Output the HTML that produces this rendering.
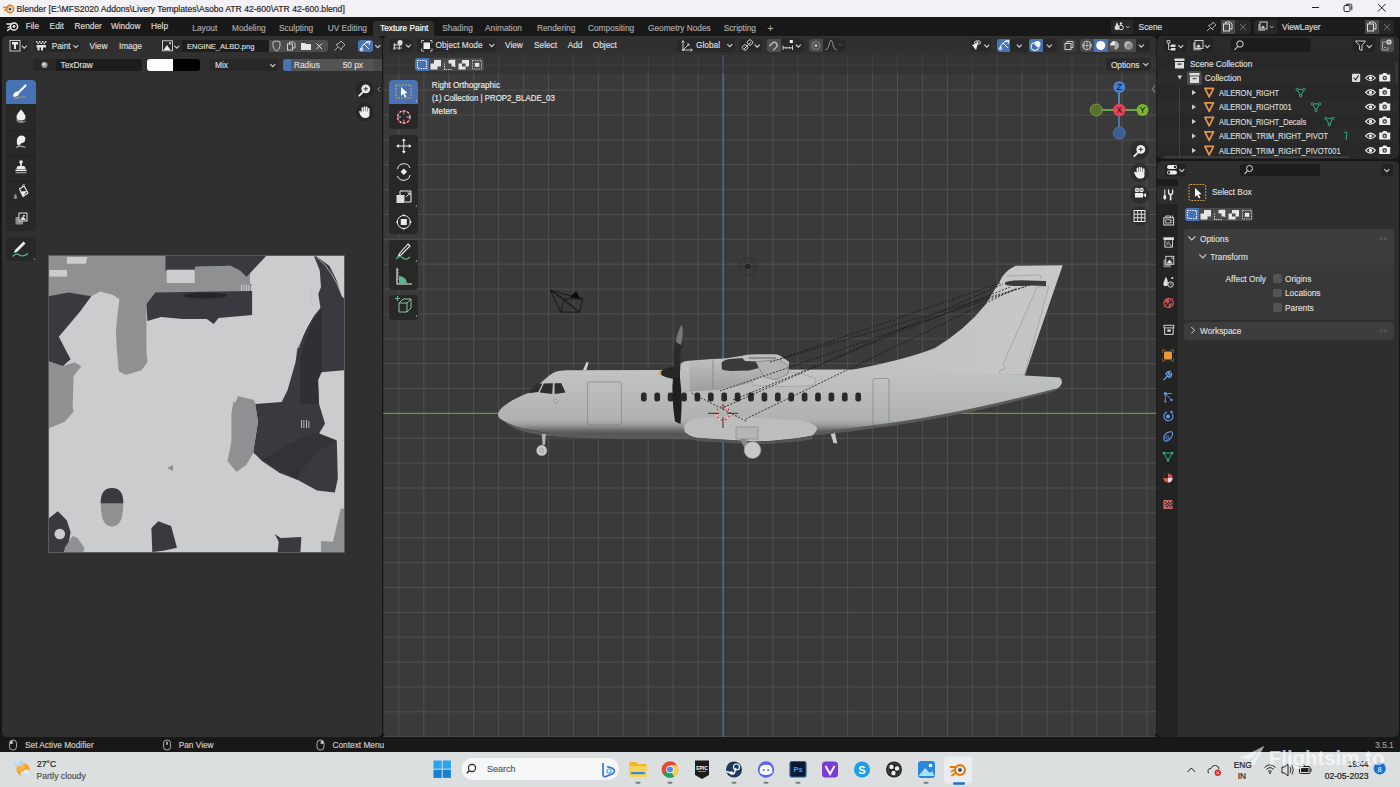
<!DOCTYPE html><html><head><meta charset="utf-8"><style>
*{margin:0;padding:0;box-sizing:border-box}
html,body{width:1400px;height:787px;overflow:hidden;background:#161616;font-family:"Liberation Sans",sans-serif;font-size:8.3px;color:#ddd}
.a{position:absolute}
.t{position:absolute;white-space:nowrap;line-height:1;-webkit-text-stroke:0.18px currentColor}
svg{overflow:visible}
</style></head><body>
<div class="a" style="left:0px;top:0px;width:1400px;height:17px;background:#f3f1f6;"></div>
<svg class="a" style="left:3px;top:3px;" width="12" height="11" viewBox="0 0 12 11"><circle cx="7" cy="6" r="3.6" fill="#f5f5f5" stroke="#e87d0d" stroke-width="1.6"/><circle cx="7" cy="6" r="1.5" fill="#265787"/><path d="M0.5 4.5 L5 4.5 M1.5 7.5 L4 6" stroke="#e87d0d" stroke-width="1.3" stroke-linecap="round"/></svg>
<div class="t" style="left:16.6px;top:5.00px;font-size:8.6px;color:#262626;">Blender [E:\MFS2020 Addons\Livery Templates\Asobo ATR 42-600\ATR 42-600.blend]</div>
<div class="a" style="left:1312px;top:7px;width:7px;height:1px;background:#1f1f1f;"></div>
<svg class="a" style="left:1343px;top:3px;" width="10" height="9" viewBox="0 0 10 9"><rect x="1" y="2.5" width="6" height="6" rx="1.2" fill="none" stroke="#1f1f1f" stroke-width="1"/><path d="M3 1.2 H7.5 Q8.8 1.2 8.8 2.5 V7" fill="none" stroke="#1f1f1f" stroke-width="1"/></svg>
<svg class="a" style="left:1377px;top:3px;" width="10" height="10" viewBox="0 0 10 10"><path d="M1 1 L8.5 8.5 M8.5 1 L1 8.5" stroke="#1f1f1f" stroke-width="1"/></svg>
<div class="a" style="left:0px;top:17px;width:1400px;height:19px;background:#181818;"></div>
<svg class="a" style="left:6px;top:20px;" width="14" height="12" viewBox="0 0 14 12"><circle cx="8" cy="6.5" r="3.6" fill="none" stroke="#e8e8e8" stroke-width="1.5"/><circle cx="8" cy="6.5" r="1.4" fill="#e8e8e8"/><path d="M1 4 L6 4 M2 7.5 L4.5 6 M1.5 10.5 L5 8" stroke="#e8e8e8" stroke-width="1.4" stroke-linecap="round"/></svg>
<div class="t" style="left:25.7px;top:22.00px;font-size:8.3px;color:#d8d8d8;">File</div>
<div class="t" style="left:49.6px;top:22.00px;font-size:8.3px;color:#d8d8d8;">Edit</div>
<div class="t" style="left:74.6px;top:22.00px;font-size:8.3px;color:#d8d8d8;">Render</div>
<div class="t" style="left:110.9px;top:22.00px;font-size:8.3px;color:#d8d8d8;">Window</div>
<div class="t" style="left:151px;top:22.00px;font-size:8.3px;color:#d8d8d8;">Help</div>
<div class="a" style="left:373px;top:21px;width:61px;height:15px;background:#303030;border-radius:4px 4px 0 0"></div>
<div class="t" style="left:192.3px;top:24.00px;font-size:8.3px;color:#a8a8a8;">Layout</div>
<div class="t" style="left:232px;top:24.00px;font-size:8.3px;color:#a8a8a8;">Modeling</div>
<div class="t" style="left:279px;top:24.00px;font-size:8.3px;color:#a8a8a8;">Sculpting</div>
<div class="t" style="left:327.7px;top:24.00px;font-size:8.3px;color:#a8a8a8;">UV Editing</div>
<div class="t" style="left:380px;top:24.00px;font-size:8.3px;color:#ffffff;">Texture Paint</div>
<div class="t" style="left:442.3px;top:24.00px;font-size:8.3px;color:#a8a8a8;">Shading</div>
<div class="t" style="left:485px;top:24.00px;font-size:8.3px;color:#a8a8a8;">Animation</div>
<div class="t" style="left:537px;top:24.00px;font-size:8.3px;color:#a8a8a8;">Rendering</div>
<div class="t" style="left:588px;top:24.00px;font-size:8.3px;color:#a8a8a8;">Compositing</div>
<div class="t" style="left:648px;top:24.00px;font-size:8.3px;color:#a8a8a8;">Geometry Nodes</div>
<div class="t" style="left:723.7px;top:24.00px;font-size:8.3px;color:#a8a8a8;">Scripting</div>
<div class="t" style="left:767.5px;top:24.00px;font-size:10px;color:#a8a8a8;">+</div>
<div class="a" style="left:1110.5px;top:19.5px;width:140px;height:14px;background:#282828;border-radius:3px"></div>
<div class="a" style="left:1133px;top:19.5px;width:88px;height:14px;background:#1d1d1d;"></div>
<div class="a" style="left:1221px;top:19.5px;width:14px;height:14px;background:#4a4a4a;"></div>
<div class="t" style="left:1138.6px;top:23.00px;font-size:8.3px;color:#d8d8d8;">Scene</div>
<svg class="a" style="left:1113px;top:21px;" width="18" height="11" viewBox="0 0 18 11"><path d="M4 1 L1.5 7 Q1.5 9 4 9 Q6.5 9 6.5 7 Z" fill="#ddd"/><circle cx="8" cy="6.5" r="2.3" fill="none" stroke="#ddd" stroke-width="1"/><circle cx="8" cy="2.5" r="1.2" fill="#ddd"/><path d="M13 5 l1.8 1.8 l1.8 -1.8" fill="none" stroke="#ccc" stroke-width="0.9"/></svg>
<svg class="a" style="left:1206px;top:21px;" width="12" height="11" viewBox="0 0 12 11"><path d="M7 1 L10 4 L8.5 5 L6.5 7.5 L7 9 L2.5 4.5 L4 4 L6.5 2.5 Z M4.5 6.5 L1 10" fill="none" stroke="#bbb" stroke-width="0.9"/></svg>
<svg class="a" style="left:1222px;top:21px;" width="12" height="11" viewBox="0 0 12 11"><rect x="1.5" y="3" width="6" height="7" fill="none" stroke="#ddd" stroke-width="1"/><path d="M3.5 3 V1 H8 L10 3 V8 H7.5" fill="none" stroke="#ddd" stroke-width="1"/></svg>
<svg class="a" style="left:1237px;top:21px;" width="12" height="11" viewBox="0 0 12 11"><path d="M3 3 L9 9 M9 3 L3 9" stroke="#777" stroke-width="0.9"/></svg>
<div class="a" style="left:1254px;top:19.5px;width:140px;height:14px;background:#282828;border-radius:3px"></div>
<div class="a" style="left:1277px;top:19.5px;width:88px;height:14px;background:#1d1d1d;"></div>
<div class="a" style="left:1365px;top:19.5px;width:14px;height:14px;background:#4a4a4a;"></div>
<div class="t" style="left:1282px;top:23.00px;font-size:8.3px;color:#d8d8d8;">ViewLayer</div>
<svg class="a" style="left:1257px;top:21px;" width="18" height="11" viewBox="0 0 18 11"><rect x="1" y="3" width="7" height="7" fill="#777"/><rect x="3" y="1" width="7" height="7" fill="#2a2a2a" stroke="#ddd" stroke-width="0.9"/><path d="M4 7 L6 4.5 L8 7 Z" fill="#ddd"/><path d="M13 5 l1.8 1.8 l1.8 -1.8" fill="none" stroke="#ccc" stroke-width="0.9"/></svg>
<svg class="a" style="left:1366px;top:21px;" width="12" height="11" viewBox="0 0 12 11"><rect x="1.5" y="3" width="6" height="7" fill="none" stroke="#ddd" stroke-width="1"/><path d="M3.5 3 V1 H8 L10 3 V8 H7.5" fill="none" stroke="#ddd" stroke-width="1"/></svg>
<svg class="a" style="left:1381px;top:21px;" width="12" height="11" viewBox="0 0 12 11"><path d="M3 3 L9 9 M9 3 L3 9" stroke="#777" stroke-width="0.9"/></svg>
<div class="a" style="left:1.5px;top:36px;width:380.3px;height:701px;background:#303030;border-radius:5px"></div>
<div class="a" style="left:8.9px;top:39.7px;width:18.7px;height:12.5px;background:#282828;border-radius:3px"></div>
<svg class="a" style="left:9px;top:40px;" width="19" height="12" viewBox="0 0 19 12"><rect x="1" y="0.5" width="10" height="10.5" fill="none" stroke="#d8d8d8" stroke-width="0.9"/><path d="M3 2 H9 V4.5 H7 V9 H5 V4.5 H3 Z" fill="#e8e8e8"/><path d="M12.8 5.6 l2.5 2.5 l2.5 -2.5" fill="none" stroke="#cfcfcf" stroke-width="1.15"/></svg>
<div class="a" style="left:33.9px;top:39.7px;width:45.7px;height:12.5px;background:#282828;border-radius:3px"></div>
<svg class="a" style="left:35px;top:40px;" width="14" height="12" viewBox="0 0 14 12"><g fill="#e0e0e0"><rect x="1" y="1" width="1.5" height="1.5"/><rect x="4" y="1" width="1.5" height="1.5"/><rect x="7" y="1" width="1.5" height="1.5"/><rect x="10" y="1" width="1.5" height="1.5"/><rect x="2.5" y="2.5" width="1.5" height="1.5"/><rect x="5.5" y="2.5" width="1.5" height="1.5"/><rect x="8.5" y="2.5" width="1.5" height="1.5"/><path d="M1.5 5 H11 V7.5 H8 V10.5 H6 V7.5 H4.5 V10.5 H2.5 V7.5 H1.5Z"/></g></svg>
<div class="t" style="left:51.7px;top:42.00px;font-size:8.3px;color:#dcdcdc;">Paint</div>
<svg class="a" style="left:73px;top:44px;" width="6" height="4" viewBox="0 0 6 4"><path d="M0.3 1.1 l2.5 2.5 l2.5 -2.5" fill="none" stroke="#cfcfcf" stroke-width="1.15"/></svg>
<div class="t" style="left:89.6px;top:42.00px;font-size:8.3px;color:#dcdcdc;">View</div>
<div class="t" style="left:118.9px;top:42.00px;font-size:8.3px;color:#dcdcdc;">Image</div>
<div class="a" style="left:160.5px;top:39.7px;width:21px;height:12.5px;background:#282828;border-radius:3px 0 0 3px"></div>
<svg class="a" style="left:161px;top:40px;" width="20" height="12" viewBox="0 0 20 12"><rect x="1.5" y="0.8" width="10" height="10" fill="none" stroke="#ddd" stroke-width="0.9"/><path d="M2.5 10 L6 5 L9.5 10Z" fill="#eee"/><circle cx="9" cy="3.3" r="1" fill="#eee"/><path d="M13.3 5.6 l2.5 2.5 l2.5 -2.5" fill="none" stroke="#cfcfcf" stroke-width="1.15"/></svg>
<div class="a" style="left:182px;top:39.7px;width:87px;height:12.5px;background:#1d1d1d;"></div>
<div class="t" style="left:187px;top:43.00px;font-size:8.1px;color:#dcdcdc;transform:scaleX(0.93);transform-origin:0 0">ENGINE_ALBD.png</div>
<div class="a" style="left:269px;top:39.7px;width:58.5px;height:12.5px;background:#4d4d4d;border-radius:0 3px 3px 0"></div>
<svg class="a" style="left:269px;top:40px;" width="58" height="12" viewBox="0 0 58 12"><path d="M4 2 L7.5 1 L11 2 V6 Q11 9 7.5 11 Q4 9 4 6Z" fill="none" stroke="#cfcfcf" stroke-width="0.9"/><rect x="18.5" y="4" width="5" height="6" fill="none" stroke="#ddd" stroke-width="0.9"/><path d="M20.5 4 V2 H24.5 L26 3.5 V8 H23.5" fill="none" stroke="#ddd" stroke-width="0.9"/><path d="M32 3 H36 L37 4 H42 V10 H32Z" fill="#e6e6e6"/><path d="M47.5 3.5 L53 9 M53 3.5 L47.5 9" stroke="#ddd" stroke-width="1"/></svg>
<svg class="a" style="left:333px;top:40px;" width="14" height="12" viewBox="0 0 14 12"><path d="M8 1 L12 5 L10.5 6 L8 9 L8.5 10 L3 4.5 L4.5 4 L7 2.5Z M5 7 L1.5 10.5" fill="none" stroke="#bdbdbd" stroke-width="0.9"/></svg>
<div class="a" style="left:358px;top:39.7px;width:14.5px;height:12.5px;background:#4772b3;border-radius:3px"></div>
<svg class="a" style="left:358px;top:40px;" width="15" height="12" viewBox="0 0 15 12"><path d="M3 10 Q4 3 11 2" fill="none" stroke="#fff" stroke-width="1"/><circle cx="3.5" cy="9.5" r="1.3" fill="none" stroke="#fff" stroke-width="0.9"/><path d="M8 2 L12 1.5 L11 5" fill="none" stroke="#fff" stroke-width="0.9"/><path d="M6 4 L11 9" stroke="#fff" stroke-width="0.9"/></svg>
<svg class="a" style="left:375px;top:44px;" width="6" height="4" viewBox="0 0 6 4"><path d="M0.3 1.1 l2.5 2.5 l2.5 -2.5" fill="none" stroke="#cfcfcf" stroke-width="1.15"/></svg>
<div class="a" style="left:33px;top:58.6px;width:108.9px;height:12.4px;background:#282828;border-radius:3px"></div>
<div class="a" style="left:55.7px;top:58.6px;width:86.2px;height:12.4px;background:#1d1d1d;border-radius:0 3px 3px 0"></div>
<svg class="a" style="left:39px;top:59px;" width="12" height="12" viewBox="0 0 12 12"><circle cx="5.5" cy="6" r="3" fill="#9a9a9a"/><circle cx="4.8" cy="5.2" r="1.6" fill="#d0d0d0"/></svg>
<div class="t" style="left:60.5px;top:61.00px;font-size:8.3px;color:#dcdcdc;">TexDraw</div>
<div class="a" style="left:147px;top:58.6px;width:26px;height:12.4px;background:#ffffff;border-radius:3px 0 0 3px"></div>
<div class="a" style="left:173px;top:58.6px;width:26.5px;height:12.4px;background:#000000;border-radius:0 3px 3px 0"></div>
<div class="a" style="left:209px;top:58.6px;width:68.5px;height:12.4px;background:#282828;border-radius:3px"></div>
<div class="t" style="left:215px;top:61.00px;font-size:8.3px;color:#dcdcdc;">Mix</div>
<svg class="a" style="left:270px;top:63px;" width="6" height="4" viewBox="0 0 6 4"><path d="M0.3 1.1 l2.5 2.5 l2.5 -2.5" fill="none" stroke="#cfcfcf" stroke-width="1.15"/></svg>
<div class="a" style="left:283px;top:58.6px;width:90px;height:12.4px;background:#545454;border-radius:3px 0 0 3px"></div>
<div class="a" style="left:283px;top:58.6px;width:7.5px;height:12.4px;background:#4772b3;border-radius:3px 0 0 3px"></div>
<div class="t" style="left:294px;top:61.00px;font-size:8.3px;color:#dcdcdc;">Radius</div>
<div class="t" style="left:342.7px;top:61.00px;font-size:8.3px;color:#dcdcdc;">50 px</div>
<div class="a" style="left:373px;top:58.6px;width:8.5px;height:12.4px;background:#4a4a4a;"></div>
<div class="a" style="left:6.4px;top:80.2px;width:29.6px;height:151px;background:#282828;border-radius:4px"></div>
<div class="a" style="left:6.4px;top:80.2px;width:29.6px;height:24.3px;background:#4772b3;border-radius:4px 4px 0 0"></div>
<div class="a" style="left:6.4px;top:104.5px;width:29.6px;height:0.8px;background:#222;"></div>
<div class="a" style="left:6.4px;top:129.8px;width:29.6px;height:0.8px;background:#222;"></div>
<div class="a" style="left:6.4px;top:155.4px;width:29.6px;height:0.8px;background:#222;"></div>
<div class="a" style="left:6.4px;top:181px;width:29.6px;height:0.8px;background:#222;"></div>
<div class="a" style="left:6.4px;top:206px;width:29.6px;height:0.8px;background:#222;"></div>
<div class="a" style="left:6.4px;top:236.7px;width:29.6px;height:24.8px;background:#282828;border-radius:4px"></div>
<svg class="a" style="left:0px;top:0px;" width="1" height="1" viewBox="0 0 1 1"><path d="M25.5 85.5 L18.5 92.5" stroke="#fff" stroke-width="2.2" stroke-linecap="round"/><path d="M13 96.5 Q13.5 92 17 91.5 Q19.5 92.5 18.5 95 Q16.5 97.5 13 96.5Z" fill="#fff"/><path d="M15 98.5 Q20 96.5 25 97" fill="none" stroke="#9a8f80" stroke-width="1.4" stroke-linecap="round"/><path d="M21 109.5 Q25.5 114.5 25.5 117 Q25.5 120.5 21 120.5 Q16.5 120.5 16.5 117 Q16.5 114.5 21 109.5Z" fill="#eee"/><path d="M16 118.5 Q16.5 123 21.5 123 Q25 123 26 120.5 Q21 122.5 16 118.5Z" fill="#8a8a8a"/><path d="M17 144 Q16 138 19.5 136 Q23.5 134.5 25.5 138 L24.5 142 L21 143.5 L19 146Z" fill="#eee"/><path d="M16 147.5 Q20 145 25.5 147.5" fill="none" stroke="#999" stroke-width="1.3"/><circle cx="21" cy="162" r="1.8" fill="#eee"/><rect x="20.2" y="163" width="1.6" height="3" fill="#eee"/><path d="M16.5 169 Q16.5 166 19 166 H23 Q25.5 166 25.5 169Z" fill="#eee"/><rect x="15.5" y="169.5" width="11" height="1.6" fill="#eee"/><rect x="15.5" y="172" width="11" height="1.3" fill="#999"/><path d="M19.5 189 L24 186 L28 193 L23 196.5 Z" fill="#2a2a2a" stroke="#eee" stroke-width="1.1" stroke-linejoin="round"/><path d="M20.5 191.5 L27 191 L23 196 Z" fill="#eee"/><path d="M22 186 Q23 183.5 25 185" fill="none" stroke="#ccc" stroke-width="0.8"/><path d="M15.5 193.5 Q13.5 196 13.8 197.5 Q14.2 199.2 15.8 199 Q17.3 198.8 17.2 197 Q17 195.5 15.5 193.5Z" fill="#8a8a8a"/><rect x="15.5" y="217" width="7.5" height="7.5" fill="#8a8a8a"/><rect x="19" y="213" width="8" height="8" fill="#2a2a2a" stroke="#ddd" stroke-width="1"/><path d="M20 220 L23 216 L26 220Z" fill="#ddd"/><circle cx="24" cy="215.8" r="1" fill="#ddd"/><path d="M23.5 241.5 L25.5 243.5 L17 252 L14 253 L15 250Z" fill="#eee"/><path d="M12.5 256.5 Q16 252.5 19.5 255 Q23 257.5 28 253.5" fill="none" stroke="#5cb88a" stroke-width="1.2"/><path d="M33.5 259.5 h1.5 v-1.5z" fill="#bbb"/></svg>
<svg class="a" style="left:0px;top:0px;" width="1" height="1" viewBox="0 0 1 1"><circle cx="364.6" cy="89.6" r="9.2" fill="#262626"/><circle cx="364.6" cy="112" r="9.2" fill="#262626"/><circle cx="365.8" cy="88.8" r="4.4" fill="#eee"/><circle cx="365.8" cy="88.8" r="3.2" fill="#e6e6e6"/><path d="M365.8 86.7 V90.9 M363.7 88.8 H367.9" stroke="#222" stroke-width="0.9"/><path d="M362.6 92.3 L359.3 95.6" stroke="#eee" stroke-width="1.8" stroke-linecap="round"/><g fill="#eee"><rect x="361.6" y="107.2" width="1.7" height="6" rx="0.85"/><rect x="363.7" y="106.2" width="1.7" height="6.5" rx="0.85"/><rect x="365.8" y="106.6" width="1.7" height="6.5" rx="0.85"/><rect x="367.9" y="108" width="1.6" height="5.5" rx="0.8"/><ellipse cx="365.3" cy="114.6" rx="4.2" ry="3.4"/><path d="M359 111.5 Q360 110.5 361.5 112 L363 114.5 L361.5 116.5 Q360 115 359 111.5Z"/></g><circle cx="379" cy="89.5" r="4" fill="#2a2a2a"/><path d="M380.2 87 L377.8 89.4 L380.2 91.8" fill="none" stroke="#aaa" stroke-width="0.9"/></svg>
<svg class="a" style="left:0px;top:0px;" width="1" height="1" viewBox="0 0 1 1"><rect x="48.5" y="255.5" width="296" height="297" fill="#cbcccd"/><polygon points="48.5,255.5 250.0,255.5 250.0,296.0 155.3,296.0 146.4,304.2 119.8,299.3 112.0,294.5 100.0,291.5 91.3,296.3 48.5,296.3" fill="#8e9092"/><polygon points="165.5,255.5 266.6,255.5 246.3,277.2 240.0,271.0 230.5,265.8 195.0,266.8 194.7,270.7 165.5,270.7" fill="#3a393f"/><polygon points="166.7,269.7 194.7,269.7 194.7,283.1 166.7,283.1" fill="#cbcccd"/><polygon points="67.0,257.0 87.3,257.0 86.0,263.8 67.0,263.8" fill="#cbcccd"/><polygon points="49.3,270.0 67.0,270.0 67.0,276.6 49.3,276.6" fill="#cbcccd"/><polygon points="48.5,296.3 68.6,292.4 91.3,296.3 80.5,311.1 58.8,336.7 70.6,359.3 62.7,366.2 48.5,361.3" fill="#3a393f"/><polygon points="119.8,296.0 146.4,298.0 146.4,350.5 147.4,362.3 141.5,370.2 125.8,375.1 118.9,371.2 116.9,350.5 115.9,330.8 117.9,311.1" fill="#8e9092"/><polygon points="195.0,266.8 230.5,265.8 240.0,270.5 246.3,276.5 247.0,282.0 244.0,287.0 195.0,292.0" fill="#8e9092"/><polygon points="239.0,284.0 252.0,284.0 252.0,292.0 239.0,292.0" fill="#8e9092"/><polygon points="146.4,304.2 155.3,292.4 252.1,291.0 252.1,314.9 218.6,318.0 213.7,323.9 206.8,319.0 182.9,319.0 161.2,317.0 147.4,320.9" fill="#3a393f"/><ellipse cx="205" cy="295.5" rx="22" ry="3" fill="#1f1e22" opacity="0.75"/><g fill="#dcdcdc"><rect x="241" y="284.5" width="0.8" height="6.5"/><rect x="243.5" y="284.5" width="0.8" height="6.5"/><rect x="246" y="284.5" width="0.8" height="6.5"/><rect x="248.5" y="285" width="0.8" height="6"/><rect x="251" y="286" width="0.8" height="5"/></g><polygon points="48.5,361.3 62.7,366.2 74.5,362.3 81.4,366.2 73.6,376.1 72.6,407.0 73.6,411.8 64.7,421.7 48.5,428.6" fill="#8e9092"/><polygon points="314.1,256.2 316.5,256.5 329.5,266.0 336.5,280.0 342.0,296.0 344.0,298.5 344.0,370.2 321.1,372.2 318.1,380.0 319.1,404.0 325.0,423.7 319.1,433.5 336.8,440.4 337.8,478.8 334.8,492.6 317.1,490.6 297.4,479.8 279.7,472.9 262.0,461.1 253.1,452.2 258.0,421.7 255.1,404.0 281.7,402.0 287.6,389.9 295.5,362.3 297.4,348.5 305.7,330.3 313.0,317.0 320.4,307.2 318.3,294.0 321.0,287.0 319.7,270.2" fill="#3a393f"/><path d="M317 257.5 Q333 270 342.5 297" fill="none" stroke="#d8d8d8" stroke-width="0.7"/><path d="M311 288 Q309 296 311.5 304 L314 305" fill="none" stroke="#bbb" stroke-width="0.7"/><path d="M320 308 Q306 322 298.5 348" fill="none" stroke="#e0e0e0" stroke-width="0.7"/><path d="M300 360 Q305 330 322 308 L322 372 L318 380 L319 404 L300 404Z" fill="#2a292e" opacity="0.6"/><g fill="#dcdcdc"><rect x="301" y="420" width="0.8" height="8"/><rect x="303.5" y="420" width="0.8" height="8"/><rect x="306" y="420" width="0.8" height="8"/><rect x="308.5" y="421" width="0.8" height="7"/></g><path d="M262 460 Q290 440 318 433 L336 440 L318 452 Q300 470 297 480Z" fill="#2c2b30" opacity="0.5"/><polygon points="233.4,402.0 255.1,402.0 258.0,421.7 253.1,453.2 246.2,465.0 236.4,471.9 227.5,461.1 231.4,441.4 231.4,413.8" fill="#8e9092"/><polygon points="233.4,408.0 238.0,396.0 254.1,400.0 255.0,408.0" fill="#8e9092"/><path d="M100.7 503.8 Q100.2 488 112 488 Q123.8 488 123.3 503.8Z" fill="#3a393f"/><path d="M100.8 503.4 H123.2 Q123.5 526.5 112 526.5 Q100.5 526.5 100.8 503.4Z" fill="#8e9092"/><polygon points="48.9,518.2 57.8,511.3 66.7,520.2 70.6,532.0 68.6,543.8 63.7,552.0 48.9,552.0" fill="#3a393f"/><circle cx="59.8" cy="534" r="5.3" fill="#cbcccd"/><polygon points="64.7,547.8 72.6,535.9 77.5,537.9 84.4,547.8 83.4,552.0 64.7,552.0" fill="#8e9092"/><polygon points="151.4,528.1 158.3,521.2 171.1,526.1 177.0,547.8 163.2,550.7 152.3,552.0" fill="#3a393f"/><polygon points="167.1,468.0 173.0,465.0 173.0,470.9" fill="#8e9092"/><polygon points="274.8,534.0 280.7,537.9 301.4,536.9 300.4,552.0 277.7,552.0 278.7,541.8" fill="#3a393f"/><polygon points="321.1,540.9 332.9,541.8 340.8,508.4 344.5,508.4 344.5,552.0 321.1,552.0" fill="#8e9092"/><rect x="48.5" y="255.5" width="296" height="297" fill="none" stroke="#555" stroke-width="0.8"/></svg>
<svg class="a" style="left:0px;top:0px;" width="1" height="1" viewBox="0 0 1 1"><rect x="383.3" y="36" width="772.9" height="701" rx="5" fill="#3a3a3a"/><path d="M398.91 36V737 M423.84 36V737 M448.77 36V737 M473.70 36V737 M498.63 36V737 M523.56 36V737 M548.49 36V737 M573.42 36V737 M598.35 36V737 M623.28 36V737 M648.21 36V737 M673.14 36V737 M698.07 36V737 M723.00 36V737 M747.93 36V737 M772.86 36V737 M797.79 36V737 M822.72 36V737 M847.65 36V737 M872.58 36V737 M897.51 36V737 M922.44 36V737 M947.37 36V737 M972.30 36V737 M997.23 36V737 M1022.16 36V737 M1047.09 36V737 M1072.02 36V737 M1096.95 36V737 M1121.88 36V737 M1146.81 36V737 M383.3 40.35H1156.2 M383.3 65.22H1156.2 M383.3 90.09H1156.2 M383.3 114.96H1156.2 M383.3 139.83H1156.2 M383.3 164.70H1156.2 M383.3 189.57H1156.2 M383.3 214.44H1156.2 M383.3 239.31H1156.2 M383.3 264.18H1156.2 M383.3 289.05H1156.2 M383.3 313.92H1156.2 M383.3 338.79H1156.2 M383.3 363.66H1156.2 M383.3 388.53H1156.2 M383.3 413.40H1156.2 M383.3 438.27H1156.2 M383.3 463.14H1156.2 M383.3 488.01H1156.2 M383.3 512.88H1156.2 M383.3 537.75H1156.2 M383.3 562.62H1156.2 M383.3 587.49H1156.2 M383.3 612.36H1156.2 M383.3 637.23H1156.2 M383.3 662.10H1156.2 M383.3 686.97H1156.2 M383.3 711.84H1156.2 M383.3 736.71H1156.2" stroke="#505050" stroke-width="1" fill="none"/><path d="M383.3 413.4H1156.2" stroke="#6a9a2a" stroke-width="1.3"/><path d="M723.2 36V737" stroke="#4a70a8" stroke-width="1.3"/></svg>
<div class="a" style="left:383.3px;top:55px;width:772.9px;height:18.6px;background:rgba(46,46,46,0.45);"></div>
<div class="a" style="left:383.3px;top:36px;width:772.9px;height:19px;background:#303030;border-radius:5px 5px 0 0"></div>
<div class="a" style="left:390.4px;top:38.6px;width:22px;height:13.4px;background:#282828;border-radius:3px"></div>
<svg class="a" style="left:391px;top:39px;" width="22" height="13" viewBox="0 0 22 13"><path d="M2 6 H11 M2 9 H11 M4 4 L3 11 M9 4 L8 11" stroke="#ddd" stroke-width="0.9"/><circle cx="9" cy="3.5" r="2.6" fill="#ddd"/><path d="M14.8 5.6 l2.5 2.5 l2.5 -2.5" fill="none" stroke="#cfcfcf" stroke-width="1.15"/></svg>
<div class="a" style="left:417px;top:38.6px;width:79px;height:13.4px;background:#282828;border-radius:3px"></div>
<svg class="a" style="left:420px;top:39px;" width="14" height="13" viewBox="0 0 14 13"><rect x="3.5" y="3.5" width="6.5" height="6.5" fill="#eee"/><path d="M1.5 4 V1.5 H4 M10 1.5 H12 V4 M12 9.5 V12 H10 M4 12 H1.5 V9.5" fill="none" stroke="#ccc" stroke-width="0.9"/></svg>
<div class="t" style="left:435.5px;top:41.00px;font-size:8.3px;color:#dcdcdc;">Object Mode</div>
<svg class="a" style="left:489px;top:43px;" width="6" height="4" viewBox="0 0 6 4"><path d="M0.3 1.1 l2.5 2.5 l2.5 -2.5" fill="none" stroke="#cfcfcf" stroke-width="1.15"/></svg>
<div class="t" style="left:505px;top:41.00px;font-size:8.3px;color:#dcdcdc;">View</div>
<div class="t" style="left:534px;top:41.00px;font-size:8.3px;color:#dcdcdc;">Select</div>
<div class="t" style="left:567.7px;top:41.00px;font-size:8.3px;color:#dcdcdc;">Add</div>
<div class="t" style="left:592.8px;top:41.00px;font-size:8.3px;color:#dcdcdc;">Object</div>
<div class="a" style="left:677px;top:38.6px;width:58px;height:13.4px;background:#282828;border-radius:3px"></div>
<svg class="a" style="left:680px;top:39px;" width="14" height="13" viewBox="0 0 14 13"><path d="M3 2 V11 H12 M3 11 L9 5" fill="none" stroke="#ddd" stroke-width="0.9"/><path d="M1.6 3.5 L3 1.5 L4.4 3.5 M10.5 9.6 L12.5 11 L10.5 12.4 M7 5 H9 V7" fill="none" stroke="#ddd" stroke-width="0.8"/><circle cx="3" cy="11" r="1.1" fill="#ddd"/></svg>
<div class="t" style="left:696px;top:41.00px;font-size:8.3px;color:#dcdcdc;">Global</div>
<svg class="a" style="left:727px;top:43px;" width="6" height="4" viewBox="0 0 6 4"><path d="M0.3 1.1 l2.5 2.5 l2.5 -2.5" fill="none" stroke="#cfcfcf" stroke-width="1.15"/></svg>
<div class="a" style="left:739.4px;top:38.6px;width:23px;height:13.4px;background:#282828;border-radius:3px"></div>
<svg class="a" style="left:741px;top:39px;" width="22" height="13" viewBox="0 0 22 13"><path d="M3 10 L10 3" stroke="#ddd" stroke-width="0.9"/><rect x="1.5" y="6" width="5" height="5" rx="2" transform="rotate(-45 4 8.5)" fill="none" stroke="#ddd" stroke-width="0.9"/><rect x="6.5" y="1" width="5" height="5" rx="2" transform="rotate(-45 9 3.5)" fill="none" stroke="#ddd" stroke-width="0.9"/><path d="M13.8 5.6 l2.5 2.5 l2.5 -2.5" fill="none" stroke="#cfcfcf" stroke-width="1.15"/></svg>
<div class="a" style="left:766.5px;top:38.6px;width:37px;height:13.4px;background:#282828;border-radius:3px"></div>
<div class="a" style="left:766.5px;top:38.6px;width:14px;height:13.4px;background:#4e4e4e;border-radius:3px 0 0 3px"></div>
<svg class="a" style="left:767px;top:39px;" width="37" height="13" viewBox="0 0 37 13"><g transform="rotate(45 7 6.5)"><path d="M4.2 10.5 V6 A2.8 2.8 0 0 1 9.8 6 V10.5" fill="none" stroke="#bbb" stroke-width="1.4"/></g><path d="M16 6.5 V11 M25.5 6.5 V11 M16 8.8 H25.5 M19 7.8 V9.8 M22.5 7.8 V9.8" stroke="#ddd" stroke-width="0.9"/><rect x="22.8" y="1" width="3" height="3" fill="#eee"/><path d="M28.8 5.6 l2.5 2.5 l2.5 -2.5" fill="none" stroke="#cfcfcf" stroke-width="1.15"/></svg>
<div class="a" style="left:808.6px;top:38.6px;width:36px;height:13.4px;background:#282828;border-radius:3px"></div>
<div class="a" style="left:808.6px;top:38.6px;width:14px;height:13.4px;background:#4a4a4a;border-radius:3px 0 0 3px"></div>
<svg class="a" style="left:809px;top:39px;" width="36" height="13" viewBox="0 0 36 13"><circle cx="7" cy="6.5" r="4" fill="none" stroke="#999" stroke-width="0.8"/><circle cx="7" cy="6.5" r="1.5" fill="#bbb"/><path d="M16 11 Q19 11 20 6 Q21 1 22 1 Q23 1 24 6 Q25 11 28 11" fill="none" stroke="#999" stroke-width="0.9"/><path d="M30 5 l1.5 1.5 l1.5 -1.5" fill="none" stroke="#666" stroke-width="0.8"/></svg>
<div class="a" style="left:970px;top:38.6px;width:21.4px;height:13.4px;background:#282828;border-radius:3px"></div>
<svg class="a" style="left:970px;top:39px;" width="22" height="13" viewBox="0 0 22 13"><path d="M2 6 L8 4 L6 11Z" fill="#eee"/><path d="M4 3.5 Q8 0 11 3.5 Q8 7 4 3.5Z" fill="none" stroke="#eee" stroke-width="0.9"/><circle cx="7.5" cy="3.5" r="1" fill="#eee"/><path d="M14.3 5.6 l2.5 2.5 l2.5 -2.5" fill="none" stroke="#cfcfcf" stroke-width="1.15"/></svg>
<div class="a" style="left:996.6px;top:38.6px;width:32px;height:13.4px;background:#282828;border-radius:3px"></div>
<div class="a" style="left:996.6px;top:38.6px;width:13.7px;height:13.4px;background:#4772b3;border-radius:3px 0 0 3px"></div>
<svg class="a" style="left:997px;top:39px;" width="32" height="13" viewBox="0 0 32 13"><path d="M3 10 Q4 3 11 2" fill="none" stroke="#fff" stroke-width="1"/><circle cx="3.5" cy="9.5" r="1.3" fill="none" stroke="#fff" stroke-width="0.9"/><path d="M8 2 L12 1.5 L11 5" fill="none" stroke="#fff" stroke-width="0.9"/><path d="M6 4 L11 9" stroke="#fff" stroke-width="0.9"/><path d="M19.8 5.6 l2.5 2.5 l2.5 -2.5" fill="none" stroke="#cfcfcf" stroke-width="1.15"/></svg>
<div class="a" style="left:1029px;top:38.6px;width:28px;height:13.4px;background:#282828;border-radius:3px"></div>
<div class="a" style="left:1029px;top:38.6px;width:13.9px;height:13.4px;background:#4772b3;border-radius:3px 0 0 3px"></div>
<svg class="a" style="left:1029px;top:39px;" width="28" height="13" viewBox="0 0 28 13"><circle cx="6" cy="7.5" r="4" fill="none" stroke="#fff" stroke-width="1"/><circle cx="8.5" cy="5" r="3" fill="#fff"/><circle cx="6" cy="7.5" r="1.4" fill="#4772b3"/><path d="M17.8 5.6 l2.5 2.5 l2.5 -2.5" fill="none" stroke="#cfcfcf" stroke-width="1.15"/></svg>
<div class="a" style="left:1062.3px;top:38.6px;width:13.4px;height:13.4px;background:#3c3c3c;border-radius:3px"></div>
<svg class="a" style="left:1062px;top:39px;" width="14" height="13" viewBox="0 0 14 13"><rect x="3" y="4.5" width="6" height="6" fill="none" stroke="#ddd" stroke-width="0.9"/><path d="M5 4.5 V2.5 H11 V8.5 H9" fill="none" stroke="#ddd" stroke-width="0.9"/></svg>
<div class="a" style="left:1080px;top:38.6px;width:70px;height:13.4px;background:#282828;border-radius:3px"></div>
<div class="a" style="left:1080px;top:38.6px;width:55.7px;height:13.4px;background:#4a4a4a;border-radius:3px 0 0 3px"></div>
<div class="a" style="left:1093.7px;top:38.6px;width:14px;height:13.4px;background:#4772b3;"></div>
<svg class="a" style="left:1080px;top:39px;" width="70" height="13" viewBox="0 0 70 13"><circle cx="7" cy="6.5" r="4.3" fill="none" stroke="#ddd" stroke-width="0.8"/><path d="M2.7 6.5 H11.3 M7 2.2 V10.8 M4.5 3 Q3 6.5 4.5 10 M9.5 3 Q11 6.5 9.5 10" fill="none" stroke="#ddd" stroke-width="0.6"/><circle cx="20.7" cy="6.5" r="4.5" fill="#fff"/><circle cx="34.6" cy="6.5" r="4.4" fill="#aaa"/><path d="M34.6 2.1 A4.4 4.4 0 0 0 30.2 6.5 H34.6Z" fill="#eee"/><path d="M34.6 6.5 V10.9 A4.4 4.4 0 0 1 30.2 6.5Z" fill="#555"/><circle cx="48.5" cy="6.5" r="4.4" fill="#999"/><circle cx="47.5" cy="5.5" r="3" fill="#bbb"/><circle cx="49" cy="7" r="2.6" fill="#888"/><path d="M58.8 5.6 l2.5 2.5 l2.5 -2.5" fill="none" stroke="#cfcfcf" stroke-width="1.15"/></svg>
<div class="a" style="left:415.4px;top:58px;width:69px;height:13px;background:#4a4a4a;border-radius:3px"></div>
<div class="a" style="left:415.4px;top:58px;width:14px;height:13px;background:#4772b3;border-radius:3px 0 0 3px"></div>
<svg class="a" style="left:415px;top:58px;" width="70" height="13" viewBox="0 0 70 13"><rect x="2.5" y="2.5" width="9" height="8" fill="none" stroke="#fff" stroke-width="1.2" stroke-dasharray="1.3 1.1"/><path d="M15.5 5.5 H19 V2 H26 V8.5 H22.5 V11.5 H15.5Z" fill="#e6e6e6"/><path d="M29.5 5.5 V11.5 H36.5 M36 2 H40 V9" fill="none" stroke="#ddd" stroke-width="1.1" stroke-dasharray="1.3 1.1"/><path d="M33.5 2 H40 V8.5 H36.5 V5.5 H33.5Z" fill="#e6e6e6"/><path d="M43.5 5.5 H47 V2 H54 V8.5 H50.5 V11.5 H43.5Z" fill="#e6e6e6"/><rect x="47" y="5.5" width="3.5" height="3" fill="#4a4a4a"/><rect x="57.5" y="2.5" width="9" height="8.5" fill="none" stroke="#ccc" stroke-width="1" stroke-dasharray="1.3 1.1"/><rect x="59.8" y="4.8" width="4.5" height="4" fill="#e6e6e6"/></svg>
<div class="a" style="left:1106.3px;top:58px;width:44.6px;height:13.4px;background:#2a2a2a;border-radius:3px"></div>
<div class="t" style="left:1110.9px;top:61.00px;font-size:8.3px;color:#dcdcdc;">Options</div>
<svg class="a" style="left:1143px;top:62px;" width="6" height="4" viewBox="0 0 6 4"><path d="M0.3 1.1 l2.5 2.5 l2.5 -2.5" fill="none" stroke="#cfcfcf" stroke-width="1.15"/></svg>
<div class="t" style="left:431.8px;top:82.00px;font-size:8.13px;color:#e8e8e8;">Right Orthographic</div>
<div class="t" style="left:431.8px;top:94.00px;font-size:8.5px;color:#e8e8e8;transform:scaleX(0.926);transform-origin:0 0">(1) Collection | PROP2_BLADE_03</div>
<div class="t" style="left:431.8px;top:108.00px;font-size:8.18px;color:#e8e8e8;">Meters</div>
<div class="a" style="left:389.3px;top:79.9px;width:29.1px;height:49.6px;background:#282828;border-radius:4px"></div>
<div class="a" style="left:389.3px;top:79.9px;width:29.1px;height:24px;background:#4772b3;border-radius:4px 4px 0 0"></div>
<div class="a" style="left:389.3px;top:134.7px;width:29.1px;height:99.2px;background:#282828;border-radius:4px"></div>
<div class="a" style="left:389.3px;top:240px;width:29.1px;height:49.6px;background:#282828;border-radius:4px"></div>
<div class="a" style="left:389.3px;top:294.8px;width:29.1px;height:24.8px;background:#282828;border-radius:4px"></div>
<svg class="a" style="left:0px;top:0px;" width="1" height="1" viewBox="0 0 1 1"><rect x="396" y="85" width="15" height="13" fill="none" stroke="#e8a33a" stroke-width="1" stroke-dasharray="1.8 1.2"/><path d="M401 87 L401 96 L403 94 L405 97.5 L406.5 96.5 L404.5 93.5 L407.5 93Z" fill="#fff"/><path d="M415.5 101.5 h1.5 v-1.5z" fill="#ddd"/><circle cx="403.8" cy="117" r="6.2" fill="none" stroke="#c33" stroke-width="1.2"/><circle cx="403.8" cy="117" r="6.2" fill="none" stroke="#ddd" stroke-width="1.2" stroke-dasharray="2 2"/><path d="M403.8 111 V114.5 M403.8 119.5 V123 M397.8 117 H401.3 M406.3 117 H409.8" stroke="#ccc" stroke-width="0.8"/><path d="M403.8 139 V153 M396.8 146 H410.8" stroke="#eee" stroke-width="1"/><path d="M403.8 138.5 l-2 2.5 h4z M403.8 153.5 l-2 -2.5 h4z M396.3 146 l2.5 -2 v4z M411.3 146 l-2.5 -2 v4z" fill="#eee"/><path d="M397.5 169 A6.5 6.5 0 0 1 410 168 M410 175 A6.5 6.5 0 0 1 397.5 176" fill="none" stroke="#eee" stroke-width="1"/><rect x="401.5" y="169.5" width="4.5" height="4.5" transform="rotate(45 403.8 171.8)" fill="#eee"/><rect x="396.5" y="195" width="8" height="8" fill="#ddd"/><path d="M400 197 V191 H411 V202 H405" fill="none" stroke="#eee" stroke-width="1"/><path d="M406 197 L410 193 M407.5 193 H410 V195.5" fill="none" stroke="#eee" stroke-width="0.9"/><path d="M415.5 206.5 h1.5 v-1.5z" fill="#ddd"/><circle cx="403.8" cy="222" r="6.5" fill="none" stroke="#eee" stroke-width="1"/><rect x="400.8" y="219" width="6" height="6" fill="#eee"/><path d="M403.8 214 l-1.5 2 h3z M403.8 230 l-1.5 -2 h3z M395.8 222 l2 -1.5 v3z M411.8 222 l-2 -1.5 v3z" fill="#eee"/><path d="M408 244 L410 246 L401 255 L398.5 256 L399.5 253.5Z" fill="none" stroke="#eee" stroke-width="1.1"/><path d="M396 259 Q400 255 403 258 Q406 261 410 257" fill="none" stroke="#5cb88a" stroke-width="1.1"/><path d="M415.5 261.5 h1.5 v-1.5z" fill="#ddd"/><path d="M397 268 V284 H412" fill="none" stroke="#eee" stroke-width="1.1"/><path d="M399 284 V276 A8 8 0 0 1 407 284Z" fill="#5cb88a"/><path d="M397 270 h2 M397 273 h2 M397 276 h2 M397 279 h2" stroke="#eee" stroke-width="0.6"/><path d="M399 303 L403 299 H411 V308 L407 312 H399Z M399 303 H407 V312 M407 303 L411 299" fill="none" stroke="#7ec8a0" stroke-width="1"/><path d="M395 298.5 H400 M397.5 296 V301" stroke="#5cb88a" stroke-width="1.2"/><path d="M415.5 316.5 h1.5 v-1.5z" fill="#ddd"/></svg>
<svg class="a" style="left:0px;top:0px;" width="1" height="1" viewBox="0 0 1 1"><path d="M1119 87 V133 M1096 110 H1143" stroke="#5a8cd0" stroke-width="1.4"/><path d="M1096 110 H1143" stroke="#78b03a" stroke-width="1.4"/><path d="M1119 110 V87" stroke="#5a8cd0" stroke-width="1.4"/><circle cx="1119.3" cy="133" r="6" fill="#3e5e8e" stroke="#4b7bc6" stroke-width="0.8"/><circle cx="1096.3" cy="110" r="6" fill="#59702e" stroke="#78b03a" stroke-width="0.8"/><circle cx="1119.3" cy="87" r="6" fill="#4a7fd0"/><circle cx="1119.3" cy="110" r="6.2" fill="#e84358"/><circle cx="1142.5" cy="110" r="6" fill="#79b52e"/><text x="1119.3" y="90.2" font-size="8.5" text-anchor="middle" fill="#101010" font-family="Liberation Sans">Z</text><text x="1119.3" y="113.2" font-size="8.5" text-anchor="middle" fill="#101010" font-family="Liberation Sans">X</text><text x="1142.5" y="113.2" font-size="8.5" text-anchor="middle" fill="#101010" font-family="Liberation Sans">Y</text><circle cx="1139.6" cy="150.3" r="9.5" fill="#2c2c2c" fill-opacity="0.85"/><circle cx="1139.6" cy="172.5" r="9.5" fill="#2c2c2c" fill-opacity="0.85"/><circle cx="1139.6" cy="194.4" r="9.5" fill="#2c2c2c" fill-opacity="0.85"/><circle cx="1139.6" cy="216" r="9.5" fill="#2c2c2c" fill-opacity="0.85"/><g transform="translate(775 60.6)"><circle cx="365.8" cy="88.8" r="4.4" fill="#eee"/><path d="M365.8 86.7 V90.9 M363.7 88.8 H367.9" stroke="#222" stroke-width="0.9"/><path d="M362.6 92.3 L359.3 95.6" stroke="#eee" stroke-width="1.8" stroke-linecap="round"/><g fill="#eee"><rect x="361.6" y="107.2" width="1.7" height="6" rx="0.85"/><rect x="363.7" y="106.2" width="1.7" height="6.5" rx="0.85"/><rect x="365.8" y="106.6" width="1.7" height="6.5" rx="0.85"/><rect x="367.9" y="108" width="1.6" height="5.5" rx="0.8"/><ellipse cx="365.3" cy="114.6" rx="4.2" ry="3.4"/><path d="M359 111.5 Q360 110.5 361.5 112 L363 114.5 L361.5 116.5 Q360 115 359 111.5Z"/></g></g><circle cx="1137" cy="190" r="2.3" fill="#eee"/><circle cx="1141.5" cy="190" r="2.3" fill="#eee"/><rect x="1135" y="193" width="8" height="4.5" fill="#eee"/><path d="M1143 195 L1146 193 V197.5Z" fill="#eee"/><path d="M1135.5 190 h3 M1140 190 h3" stroke="#2c2c2c" stroke-width="0.8"/><rect x="1134" y="210.5" width="11" height="11" fill="none" stroke="#eee" stroke-width="1"/><path d="M1137.7 210.5 V221.5 M1141.3 210.5 V221.5 M1134 214.2 H1145 M1134 217.8 H1145" stroke="#eee" stroke-width="0.9"/><path d="M1155 85.5 L1152.5 89 L1155 92.5" fill="none" stroke="#999" stroke-width="0.9"/></svg>
<svg class="a" style="left:0px;top:0px;" width="1" height="1" viewBox="0 0 1 1"><path d="M564.6 299 H582.7 L579.4 312.1 H560.5 Z M550.2 290.2 L564.6 299 M550.2 290.2 L582.7 299 M550.2 290.2 L560.5 312.1 M550.2 290.2 L579.4 312.1 M564.6 299 L579.4 312.1" fill="none" stroke="#111" stroke-width="0.8"/><path d="M569.6 297.6 L576.1 291.1 L580.2 298.5Z" fill="#0a0a0a"/></svg>
<svg class="a" style="left:0px;top:0px;" width="1" height="1" viewBox="0 0 1 1"><circle cx="747.8" cy="266.4" r="8.6" fill="none" stroke="#1e1e1e" stroke-width="0.9" stroke-dasharray="2 1.6"/><circle cx="747.8" cy="266.4" r="5.5" fill="none" stroke="#2a2a2a" stroke-width="0.7" stroke-dasharray="1.5 1.5"/><circle cx="747.8" cy="266.4" r="2.2" fill="none" stroke="#111" stroke-width="0.9"/><circle cx="747.8" cy="266.4" r="0.9" fill="#111"/></svg>
<svg class="a" style="left:0px;top:0px;" width="1" height="1" viewBox="0 0 1 1"><defs><linearGradient id="fus" gradientUnits="userSpaceOnUse" x1="0" y1="370" x2="0" y2="437"><stop offset="0" stop-color="#c2c4c4"/><stop offset="0.3" stop-color="#bbbdbd"/><stop offset="0.75" stop-color="#b0b2b2"/><stop offset="0.82" stop-color="#9a9c9c"/><stop offset="0.9" stop-color="#6a6a6a"/><stop offset="1" stop-color="#454545"/></linearGradient><linearGradient id="tail" x1="0" y1="0" x2="1" y2="0"><stop offset="0" stop-color="#bfc1c1"/><stop offset="1" stop-color="#c8caca"/></linearGradient><linearGradient id="nac" x1="0" y1="0" x2="0" y2="1"><stop offset="0" stop-color="#c4c4c4"/><stop offset="1" stop-color="#9c9c9c"/></linearGradient></defs><path d="M846 371 Q905 360 935 348 Q965 330 985.4 304.8 L999.6 281.7 Q1004 271 1015.6 265.7 L1062.7 265.3 L1024.5 376 Z" fill="url(#tail)"/><path d="M1037 287 L1049 286 L1024.5 375 L999.6 375 L1000 370 L1005 369 L1003 364 Z" fill="#c4c4c4" stroke="#8a8a8a" stroke-width="0.5"/><path d="M1006.7 276 L1040 275 L1041 279" fill="none" stroke="#888" stroke-width="0.5"/><path d="M1005 282.5 Q1012 279.5 1030 280.5 L1046 281 L1046 286 L1030 285.5 Q1012 287 1005 284.5Z" fill="#3a3a3a"/><path d="M583 370 L586.5 361.9 L588.6 362.6 L586.5 370Z" fill="#d0d0d0"/><path d="M498.1 414.3 Q499 409 504 405.9 Q512 400 518 397.5 Q524 394.5 530.5 392 Q537 386 543.1 380.8 Q548 376 552.9 373 Q558 370.3 566.9 370.3 L848 369.4 Q960 371 1059.7 377.5 Q1063 380 1061.5 384 Q1060 387.5 1056.5 389 Q1000 404 960 412 Q890 426 818 432.5 Q790 436 760 437 L600 435.5 L559.9 433.9 Q538.9 432.5 518 427.6 Q504 422 500 418.5 Q497.5 416 498.1 414.3Z" fill="url(#fus)"/><path d="M504 421.3 Q518 428.5 540 432 L600 434.5 L760 436 Q790 435 818 431.5 Q890 425 960 411 Q1000 403 1056.5 388.5 Q1057 390 1055 391 Q1000 406 960 414 Q890 428 818 435 Q790 439 760 440 L600 438.5 L559 437 Q536 435.5 518 430 Q508 426 504 421.3Z" fill="#5a5a5a"/><path d="M528.4 393.3 L536.1 383.6 L542.4 383.6 L538.2 392Z M539.6 392.6 L543.8 383.6 L552.9 383.3 L552.2 394Z M554.6 383.3 L561.3 383.3 L565.5 392.6 L554.6 394Z" fill="#2e2e2e"/><rect x="553.5" y="399.3" width="4.3" height="3.5" rx="1" fill="none" stroke="#8a8a8a" stroke-width="0.5"/><rect x="587.6" y="381.9" width="33.8" height="42.9" rx="2" fill="none" stroke="#7a7a7a" stroke-width="0.6"/><rect x="873" y="378.5" width="16" height="46.5" rx="1.5" fill="none" stroke="#7a7a7a" stroke-width="0.6"/><rect x="640.95" y="392.6" width="5.7" height="9" rx="2.3" fill="#2a2a2a"/><rect x="654.35" y="392.6" width="5.7" height="9" rx="2.3" fill="#2a2a2a"/><rect x="667.75" y="392.6" width="5.7" height="9" rx="2.3" fill="#2a2a2a"/><rect x="681.15" y="392.6" width="5.7" height="9" rx="2.3" fill="#2a2a2a"/><rect x="694.55" y="392.6" width="5.7" height="9" rx="2.3" fill="#2a2a2a"/><rect x="707.95" y="392.6" width="5.7" height="9" rx="2.3" fill="#2a2a2a"/><rect x="721.35" y="392.6" width="5.7" height="9" rx="2.3" fill="#2a2a2a"/><rect x="734.75" y="392.6" width="5.7" height="9" rx="2.3" fill="#2a2a2a"/><rect x="748.15" y="392.6" width="5.7" height="9" rx="2.3" fill="#2a2a2a"/><rect x="761.55" y="392.6" width="5.7" height="9" rx="2.3" fill="#2a2a2a"/><rect x="774.95" y="392.6" width="5.7" height="9" rx="2.3" fill="#2a2a2a"/><rect x="788.35" y="392.6" width="5.7" height="9" rx="2.3" fill="#2a2a2a"/><rect x="801.75" y="392.6" width="5.7" height="9" rx="2.3" fill="#2a2a2a"/><rect x="815.15" y="392.6" width="5.7" height="9" rx="2.3" fill="#2a2a2a"/><rect x="828.55" y="392.6" width="5.7" height="9" rx="2.3" fill="#2a2a2a"/><rect x="841.95" y="392.6" width="5.7" height="9" rx="2.3" fill="#2a2a2a"/><rect x="855.35" y="392.6" width="5.7" height="9" rx="2.3" fill="#2a2a2a"/><path d="M752 373 Q790 367 815.4 378.6 Q816.5 384 811.6 385.5 Q790 387.5 760 385.5 L752 385Z" fill="#c2c4c4" stroke="#8a8a8a" stroke-width="0.5"/><path d="M680.5 364 Q682 361 689.3 360.7 L711.8 359.1 L725 358.5 L741 356 L779 355 L789 361.8 L789 372 L762.2 376.8 Q750 383 746.1 384.3 L719.3 389.7 L682.9 391.8 Q679.5 378 680.5 364Z" fill="url(#nac)"/><path d="M681 366 Q683 362 689 361.5 L690 390.5 L683 391.5 Q680 379 681 366Z" fill="#c6c6c6" opacity="0.6"/><path d="M712.9 359.5 V389" stroke="#888" stroke-width="0.8"/><path d="M721.5 362.9 Q724 359.5 730 359.1 L742.9 358 Q752 358.5 755.7 360.7 Q759 364 757.9 368.2 L749.3 370.4 L730 370.9 Q723 370.5 722 369.3Z" fill="#3a3a3a"/><path d="M740.7 356.5 Q745 354 760 354.3 L777 354.3 Q780.5 356 779.3 359 L765 361.8 L745 361 Z" fill="#bdbdbd"/><path d="M749 358 H776" stroke="#555" stroke-width="0.9"/><path d="M755.7 361.8 L779.3 359.5 L789 366 L788 374 L776 380 L764 377 Z" fill="#b2b2b2" stroke="#666" stroke-width="0.5"/><path d="M683.8 426.3 Q688 420 697.2 418.7 Q720 416 735.3 416.8 L802 420.6 Q815 424 817.3 428.2 Q816 433 811.6 435.8 Q790 440 754.4 441.6 L697.2 437.7 Q688 436 684.8 432Z" fill="#bdbdbd"/><path d="M684.8 432 Q690 437 697.2 438 L754.4 442 Q790 440.5 811.6 436 Q814 438 812 439.5 Q790 443 754.4 444.5 L697 441 Q688 439 684.8 432Z" fill="#555"/><rect x="736" y="427" width="22" height="12" fill="#b5b5b5" stroke="#777" stroke-width="0.5"/><path d="M740 439 L744 447 L748 447 L747 439Z" fill="#8a8a8a"/><circle cx="752.5" cy="450.1" r="8.4" fill="#c8c8c8"/><circle cx="752.5" cy="450.1" r="8.4" fill="none" stroke="#999" stroke-width="0.5"/><path d="M541.7 434 L545.9 434 L545 445 L542.5 445Z" fill="#b0b0b0"/><circle cx="541.7" cy="450.4" r="5.3" fill="#c8c8c8"/><circle cx="541.7" cy="450.4" r="2" fill="none" stroke="#888" stroke-width="0.6"/><path d="M830.7 434 L835 433 L837.3 443.5 L833.5 443Z" fill="#c8c8c8"/><path d="M659 372.9 Q666 366 680 366.5 L680 379 Q666 379.5 659 372.9Z" fill="#262626"/><circle cx="659.8" cy="373" r="1.6" fill="#f0a030"/><path d="M673 378 Q671 395 675 421.5 L680.5 424 Q683 400 680 378Z" fill="#1f1f1f"/><path d="M674.5 367 Q672 352 676 340 L681.5 332 L682 324.3 Q684.5 340 680.5 352 L680 367Z" fill="#2a2a2a"/><path d="M676 342 Q677 332 682 324.3 Q684 335 681 345Z" fill="#777"/><circle cx="723" cy="413.3" r="6.8" fill="none" stroke="#d33" stroke-width="1.2"/><circle cx="723" cy="413.3" r="6.8" fill="none" stroke="#eee" stroke-width="1.2" stroke-dasharray="2.2 2.2"/><path d="M708 413.3 H719 M727 413.3 H738 M723 404 V409.5 M723 417 V428" stroke="#222" stroke-width="0.9"/><path d="M691.5 393 L746.8 421.5" stroke="#151515" stroke-width="0.8" stroke-dasharray="2 1.5"/><path d="M723.9 407.2 L1003 284" stroke="#151515" stroke-width="0.8" stroke-dasharray="2 1.5"/><path d="M733 400 L1010 287" stroke="#151515" stroke-width="0.8" stroke-dasharray="2 1.5"/><path d="M745.7 419 L1017 288" stroke="#151515" stroke-width="0.8" stroke-dasharray="2 1.5"/><path d="M780 359 L1000 283" stroke="#151515" stroke-width="0.8" stroke-dasharray="2 1.5"/><path d="M720 391 L1030 285" stroke="#151515" stroke-width="0.8" stroke-dasharray="2 1.5"/><path d="M770 362 L1024 287" stroke="#151515" stroke-width="0.8" stroke-dasharray="2 1.5"/></svg>
<div class="a" style="left:1157px;top:36px;width:241.5px;height:122.5px;background:#282828;border-radius:5px"></div>
<div class="a" style="left:1157px;top:36px;width:241.5px;height:19px;background:#2a2a2a;border-radius:5px 5px 0 0"></div>
<div class="a" style="left:1163.8px;top:38.4px;width:23.2px;height:13.9px;background:#232323;border-radius:3px"></div>
<div class="a" style="left:1190.8px;top:38.4px;width:22.7px;height:13.9px;background:#232323;border-radius:3px"></div>
<div class="a" style="left:1230.6px;top:38.4px;width:80px;height:13.9px;background:#1d1d1d;border-radius:3px"></div>
<div class="a" style="left:1352.5px;top:38.4px;width:22.5px;height:13.9px;background:#232323;border-radius:3px"></div>
<div class="a" style="left:1379.9px;top:38.4px;width:13.9px;height:13.9px;background:#4a4a4a;border-radius:3px"></div>
<div class="a" style="left:1158px;top:70.65px;width:240px;height:14.5px;background:#2b2b2b;"></div>
<div class="a" style="left:1158px;top:99.65px;width:240px;height:14.5px;background:#2b2b2b;"></div>
<div class="a" style="left:1158px;top:128.65px;width:240px;height:14.5px;background:#2b2b2b;"></div>
<div class="t" style="left:1190px;top:60.00px;font-size:8.3px;color:#dcdcdc;">Scene Collection</div>
<div class="t" style="left:1204.8px;top:74.00px;font-size:8.3px;color:#dcdcdc;">Collection</div>
<div class="t" style="left:1219px;top:90.00px;font-size:8.2px;color:#d6d6d6;transform:scaleX(0.912);transform-origin:0 0">AILERON_RIGHT</div>
<div class="t" style="left:1219px;top:104.00px;font-size:8.2px;color:#d6d6d6;transform:scaleX(0.912);transform-origin:0 0">AILERON_RIGHT001</div>
<div class="t" style="left:1219px;top:119.00px;font-size:8.2px;color:#d6d6d6;transform:scaleX(0.912);transform-origin:0 0">AILERON_RIGHT_Decals</div>
<div class="t" style="left:1219px;top:133.00px;font-size:8.2px;color:#d6d6d6;transform:scaleX(0.912);transform-origin:0 0">AILERON_TRIM_RIGHT_PIVOT</div>
<div class="t" style="left:1219px;top:148.00px;font-size:8.2px;color:#d6d6d6;transform:scaleX(0.912);transform-origin:0 0">AILERON_TRIM_RIGHT_PIVOT001</div>
<svg class="a" style="left:0px;top:0px;" width="1" height="1" viewBox="0 0 1 1"><path d="M1167 40.5 H1170 V43 H1167Z M1168.5 43 V49.5 H1171 M1168.5 46 H1171" fill="none" stroke="#ddd" stroke-width="0.8"/><rect x="1171" y="44.5" width="4.5" height="2.5" fill="#ddd"/><rect x="1171" y="48" width="4.5" height="2.5" fill="#ddd"/><path d="M1178.3 45.1 l2.5 2.5 l2.5 -2.5" fill="none" stroke="#cfcfcf" stroke-width="1.15"/><rect x="1193" y="42.5" width="8" height="8" fill="#888"/><rect x="1195" y="40.5" width="8" height="8" fill="#2a2a2a" stroke="#ddd" stroke-width="0.9"/><path d="M1196 47.5 L1198.5 44 L1201 47.5Z" fill="#ddd"/><path d="M1204.8 45.1 l2.5 2.5 l2.5 -2.5" fill="none" stroke="#cfcfcf" stroke-width="1.15"/><circle cx="1240" cy="44" r="3.2" fill="none" stroke="#ddd" stroke-width="1"/><path d="M1237.7 46.5 L1234.5 50" stroke="#ddd" stroke-width="1.1"/><path d="M1355.5 41 H1365.5 L1362 45.5 V50.5 L1359.5 49.5 V45.5Z" fill="none" stroke="#ddd" stroke-width="0.9"/><path d="M1366.8 45.1 l2.5 2.5 l2.5 -2.5" fill="none" stroke="#cfcfcf" stroke-width="1.15"/><path d="M1382.5 42 H1386 M1382.5 42 V50 H1388 V47" fill="none" stroke="#bbb" stroke-width="0.8"/><path d="M1384 47.5 h2" stroke="#bbb" stroke-width="0.8"/><circle cx="1389" cy="42" r="2.6" fill="#ddd"/><path d="M1389 40.6 V43.4 M1387.6 42 H1390.4" stroke="#444" stroke-width="0.7"/><rect x="1174.5" y="58.5" width="10" height="2.5" fill="#ddd"/><rect x="1175" y="62" width="9" height="6.5" fill="#ddd"/><rect x="1177.5" y="63.5" width="4" height="1.2" fill="#282828"/><path d="M1177.5 75.5 H1182 L1179.75 79.5Z" fill="#ddd"/><rect x="1187" y="71" width="14.6" height="14" rx="2.5" fill="#4d4d4d"/><rect x="1189.5" y="73" width="10" height="2.5" fill="#ddd"/><rect x="1190" y="76.5" width="9" height="6.5" fill="#ddd"/><rect x="1192.5" y="78" width="4" height="1.2" fill="#4d4d4d"/><rect x="1352" y="73.8" width="8.2" height="8.2" rx="1" fill="#ddd"/><path d="M1353.8 77.8 L1355.6 79.8 L1358.6 75.5" fill="none" stroke="#222" stroke-width="1.1"/><path d="M1365.5 78 Q1370.5 72.5 1375.5 78 Q1370.5 83.5 1365.5 78Z" fill="none" stroke="#eee" stroke-width="1.1"/><circle cx="1370.5" cy="78" r="1.7" fill="#eee"/><path d="M1379.2 74.5 H1382.2 L1383.2 73.0 H1386.2 L1387.2 74.5 H1390.2 V81.5 H1379.2Z" fill="#eee"/><circle cx="1384.7" cy="78.0" r="2.3" fill="#444"/><circle cx="1384.7" cy="78.0" r="1" fill="#ccc"/><path d="M1179.5 87 V158" stroke="#4a4a4a" stroke-width="0.8"/><path d="M1192 89.9 L1196 92.4 L1192 94.9Z" fill="#ccc"/><path d="M1204.9 88.4 H1213.5 L1209.2 96.9Z" fill="none" stroke="#e0954a" stroke-width="1.8" stroke-linejoin="round"/><path d="M1297.1 89.4 H1304.1 L1300.6 95.9Z" fill="none" stroke="#3ab58a" stroke-width="0.9"/><circle cx="1297.1" cy="89.4" r="1.2" fill="#282828" stroke="#3ab58a" stroke-width="0.8"/><circle cx="1304.1" cy="89.4" r="1.2" fill="#282828" stroke="#3ab58a" stroke-width="0.8"/><circle cx="1300.6" cy="95.9" r="1.2" fill="#282828" stroke="#3ab58a" stroke-width="0.8"/><path d="M1365.5 92.4 Q1370.5 86.9 1375.5 92.4 Q1370.5 97.9 1365.5 92.4Z" fill="none" stroke="#eee" stroke-width="1.1"/><circle cx="1370.5" cy="92.4" r="1.7" fill="#eee"/><path d="M1379.2 88.9 H1382.2 L1383.2 87.4 H1386.2 L1387.2 88.9 H1390.2 V95.9 H1379.2Z" fill="#eee"/><circle cx="1384.7" cy="92.4" r="2.3" fill="#444"/><circle cx="1384.7" cy="92.4" r="1" fill="#ccc"/><path d="M1192 104.4 L1196 106.9 L1192 109.4Z" fill="#ccc"/><path d="M1204.9 102.9 H1213.5 L1209.2 111.4Z" fill="none" stroke="#e0954a" stroke-width="1.8" stroke-linejoin="round"/><path d="M1312.5 103.9 H1319.5 L1316 110.4Z" fill="none" stroke="#3ab58a" stroke-width="0.9"/><circle cx="1312.5" cy="103.9" r="1.2" fill="#282828" stroke="#3ab58a" stroke-width="0.8"/><circle cx="1319.5" cy="103.9" r="1.2" fill="#282828" stroke="#3ab58a" stroke-width="0.8"/><circle cx="1316" cy="110.4" r="1.2" fill="#282828" stroke="#3ab58a" stroke-width="0.8"/><path d="M1365.5 106.9 Q1370.5 101.4 1375.5 106.9 Q1370.5 112.4 1365.5 106.9Z" fill="none" stroke="#eee" stroke-width="1.1"/><circle cx="1370.5" cy="106.9" r="1.7" fill="#eee"/><path d="M1379.2 103.4 H1382.2 L1383.2 101.9 H1386.2 L1387.2 103.4 H1390.2 V110.4 H1379.2Z" fill="#eee"/><circle cx="1384.7" cy="106.9" r="2.3" fill="#444"/><circle cx="1384.7" cy="106.9" r="1" fill="#ccc"/><path d="M1192 118.9 L1196 121.4 L1192 123.9Z" fill="#ccc"/><path d="M1204.9 117.4 H1213.5 L1209.2 125.9Z" fill="none" stroke="#e0954a" stroke-width="1.8" stroke-linejoin="round"/><path d="M1325.8 118.4 H1332.8 L1329.3 124.9Z" fill="none" stroke="#3ab58a" stroke-width="0.9"/><circle cx="1325.8" cy="118.4" r="1.2" fill="#282828" stroke="#3ab58a" stroke-width="0.8"/><circle cx="1332.8" cy="118.4" r="1.2" fill="#282828" stroke="#3ab58a" stroke-width="0.8"/><circle cx="1329.3" cy="124.9" r="1.2" fill="#282828" stroke="#3ab58a" stroke-width="0.8"/><path d="M1365.5 121.4 Q1370.5 115.9 1375.5 121.4 Q1370.5 126.9 1365.5 121.4Z" fill="none" stroke="#eee" stroke-width="1.1"/><circle cx="1370.5" cy="121.4" r="1.7" fill="#eee"/><path d="M1379.2 117.9 H1382.2 L1383.2 116.4 H1386.2 L1387.2 117.9 H1390.2 V124.9 H1379.2Z" fill="#eee"/><circle cx="1384.7" cy="121.4" r="2.3" fill="#444"/><circle cx="1384.7" cy="121.4" r="1" fill="#ccc"/><path d="M1192 133.4 L1196 135.9 L1192 138.4Z" fill="#ccc"/><path d="M1204.9 131.9 H1213.5 L1209.2 140.4Z" fill="none" stroke="#e0954a" stroke-width="1.8" stroke-linejoin="round"/><path d="M1344 132.9 Q1346 130.9 1347 132.9 L1346 139.9" fill="none" stroke="#3ab58a" stroke-width="0.9"/><path d="M1365.5 135.9 Q1370.5 130.4 1375.5 135.9 Q1370.5 141.4 1365.5 135.9Z" fill="none" stroke="#eee" stroke-width="1.1"/><circle cx="1370.5" cy="135.9" r="1.7" fill="#eee"/><path d="M1379.2 132.4 H1382.2 L1383.2 130.9 H1386.2 L1387.2 132.4 H1390.2 V139.4 H1379.2Z" fill="#eee"/><circle cx="1384.7" cy="135.9" r="2.3" fill="#444"/><circle cx="1384.7" cy="135.9" r="1" fill="#ccc"/><path d="M1192 147.9 L1196 150.4 L1192 152.9Z" fill="#ccc"/><path d="M1204.9 146.4 H1213.5 L1209.2 154.9Z" fill="none" stroke="#e0954a" stroke-width="1.8" stroke-linejoin="round"/><path d="M1365.5 150.4 Q1370.5 144.9 1375.5 150.4 Q1370.5 155.9 1365.5 150.4Z" fill="none" stroke="#eee" stroke-width="1.1"/><circle cx="1370.5" cy="150.4" r="1.7" fill="#eee"/><path d="M1379.2 146.9 H1382.2 L1383.2 145.4 H1386.2 L1387.2 146.9 H1390.2 V153.9 H1379.2Z" fill="#eee"/><circle cx="1384.7" cy="150.4" r="2.3" fill="#444"/><circle cx="1384.7" cy="150.4" r="1" fill="#ccc"/><rect x="1164" y="156.3" width="186" height="1.6" rx="0.8" fill="#3e3e3e"/><rect x="1395.5" y="62" width="2" height="21" rx="1" fill="#3a3a3a"/></svg>
<div class="a" style="left:1157px;top:161px;width:241.5px;height:576px;background:#2e2e2e;border-radius:5px"></div>
<div class="a" style="left:1157px;top:179px;width:20.8px;height:558px;background:#232323;border-radius:0 0 0 5px"></div>
<div class="a" style="left:1157px;top:179px;width:20.8px;height:7.4px;background:#1d1d1d;"></div>
<div class="a" style="left:1157px;top:186.4px;width:20.8px;height:18.1px;background:#2e2e2e;border-radius:4px 0 0 4px"></div>
<div class="a" style="left:1165px;top:163.5px;width:21px;height:12.5px;background:#232323;border-radius:3px"></div>
<div class="a" style="left:1240px;top:163.5px;width:80px;height:12.5px;background:#1d1d1d;border-radius:3px"></div>
<div class="a" style="left:1381px;top:163.6px;width:11.8px;height:12.1px;background:#232323;border-radius:3px"></div>
<svg class="a" style="left:0px;top:0px;" width="1" height="1" viewBox="0 0 1 1"><rect x="1167" y="165" width="10" height="4" rx="2" fill="#eee"/><rect x="1167" y="170.5" width="10" height="4" rx="2" fill="#eee"/><circle cx="1175" cy="167" r="1.2" fill="#222"/><circle cx="1169" cy="172.5" r="1.2" fill="#222"/><path d="M1179.3 169.1 l2.5 2.5 l2.5 -2.5" fill="none" stroke="#cfcfcf" stroke-width="1.15"/><circle cx="1249.5" cy="168.5" r="3" fill="none" stroke="#ddd" stroke-width="1"/><path d="M1247.3 170.8 L1244.5 174" stroke="#ddd" stroke-width="1.1"/><path d="M1384.3 169.1 l2.5 2.5 l2.5 -2.5" fill="none" stroke="#cfcfcf" stroke-width="1.15"/><path d="M1164.8 189.5 V194.5" stroke="#eee" stroke-width="1"/><path d="M1164.8 194 Q1166.8 196 1166.3 198 Q1165.8 199.8 1164.8 199.8 Q1163.8 199.8 1163.3 198 Q1162.8 196 1164.8 194Z" fill="#eee"/><path d="M1170.6 194 V200.3" stroke="#eee" stroke-width="1.6"/><path d="M1168.6 189.5 V192.5 Q1168.6 194.5 1170.6 194.5 Q1172.6 194.5 1172.6 192.5 V189.5" fill="none" stroke="#eee" stroke-width="1.3"/><rect x="1163.8" y="217.8" width="9.8" height="7.2" fill="none" stroke="#ddd" stroke-width="1"/><path d="M1165.8 217.8 V216 H1170.5 V217.8" fill="none" stroke="#ddd" stroke-width="0.9"/><circle cx="1172.5" cy="216.2" r="0.7" fill="#ddd"/><rect x="1165.8" y="219.8" width="4.5" height="3.2" fill="none" stroke="#ddd" stroke-width="0.8"/><rect x="1171.3" y="220" width="1" height="1" fill="#ddd"/><rect x="1171.3" y="222" width="1" height="1" fill="#ddd"/><rect x="1163.4" y="237.3" width="10.5" height="2.8" fill="#ddd"/><path d="M1164.8 240.2 V247.2 H1172.5 V240.2" fill="none" stroke="#ddd" stroke-width="0.9"/><path d="M1165.8 246.5 L1168.6 241.5 L1171.5 246.5 M1165.8 241.5 L1171.5 246.5" fill="none" stroke="#bbb" stroke-width="0.7"/><rect x="1163.4" y="259.5" width="7.5" height="7.8" fill="#7a7a7a"/><rect x="1165.8" y="256.3" width="8" height="8" fill="#2a2a2a" stroke="#ddd" stroke-width="0.9"/><path d="M1166.5 263.6 L1169.5 259.5 L1172.8 263.6Z" fill="#ddd"/><circle cx="1172" cy="258.2" r="0.8" fill="#ddd"/><path d="M1165.8 276.8 L1163.2 283.8 Q1163.3 286.3 1165.8 286.3 Q1167.8 286.3 1168 284.5 L1167.5 280Z" fill="#ddd"/><circle cx="1170.6" cy="284.5" r="2.7" fill="#232323" stroke="#ddd" stroke-width="1"/><circle cx="1172.3" cy="278" r="1.1" fill="#ddd"/><path d="M1170.6 283 V284.7 H1171.8" fill="none" stroke="#ddd" stroke-width="0.6"/><circle cx="1168.7" cy="302.9" r="4.6" fill="none" stroke="#c25a64" stroke-width="1.3"/><path d="M1165 300 Q1167 298.5 1169.5 299.5 L1168.5 302.5 L1166 303Z M1169 304 L1172 303 L1171 306.5 L1168.5 307Z" fill="#c25a64"/><path d="M1163.5 307.5 L1173.5 298" stroke="#c25a64" stroke-width="0.8"/><rect x="1164" y="325.3" width="9.8" height="2.6" fill="none" stroke="#ddd" stroke-width="0.9"/><path d="M1164.6 328.2 V334.4 H1173.2 V328.2" fill="none" stroke="#ddd" stroke-width="1"/><rect x="1167.3" y="329.5" width="3.5" height="2.2" fill="#ddd"/><rect x="1164" y="351.5" width="8" height="8" rx="1" fill="#e4963e"/><path d="M1162.5 353 V350 H1165.5 M1170.5 350 H1173.5 V353 M1173.5 358 V361 H1170.5 M1165.5 361 H1162.5 V358" fill="none" stroke="#a06b36" stroke-width="0.8"/><path d="M1163.5 380 L1168 375.5 M1166 374 Q1167 371.5 1170 371.5 L1168.5 373.5 L1169.5 375 L1171.5 373.5 Q1172 376.5 1169 377.5Z" fill="none" stroke="#6a9ae6" stroke-width="1.3"/><path d="M1165.3 393.5 V401.5 M1165.3 393.5 L1171.5 400 M1165.3 393.5 H1172" stroke="#6a9ae6" stroke-width="0.9"/><circle cx="1165.3" cy="393.5" r="1.5" fill="#6a9ae6"/><circle cx="1171.5" cy="400" r="1.2" fill="#6a9ae6"/><circle cx="1165.3" cy="401.5" r="1.1" fill="#6a9ae6"/><path d="M1172 413.5 A4.5 4.5 0 1 1 1167 412" fill="none" stroke="#6a9ae6" stroke-width="1.1"/><circle cx="1168" cy="416.5" r="2" fill="#6a9ae6"/><circle cx="1171.5" cy="412" r="1.2" fill="#6a9ae6"/><path d="M1164 440 Q1163 434 1169 432 Q1173 431 1172.5 434 Q1172 439 1166 441.5Z" fill="none" stroke="#6a9ae6" stroke-width="1.1"/><circle cx="1167.5" cy="437.5" r="1.6" fill="none" stroke="#6a9ae6" stroke-width="0.9"/><path d="M1163.8 453 H1172.2 L1168 460.5Z" fill="none" stroke="#2fb58a" stroke-width="1"/><circle cx="1163.8" cy="453" r="1.2" fill="#2fb58a"/><circle cx="1172.2" cy="453" r="1.2" fill="#2fb58a"/><circle cx="1168" cy="460.5" r="1.2" fill="#2fb58a"/><circle cx="1168" cy="478" r="4.6" fill="#c85a5a"/><path d="M1168 473.4 V478 H1163.4 A4.6 4.6 0 0 1 1168 473.4Z" fill="#222"/><path d="M1168 478 H1172.6 A4.6 4.6 0 0 1 1168 482.6Z" fill="#f0d0d0"/><g fill="#c86a6a"><rect x="1163.5" y="500" width="9" height="9"/></g><g fill="#2a2a2a"><rect x="1165" y="501.5" width="1.5" height="1.5"/><rect x="1168" y="501.5" width="1.5" height="1.5"/><rect x="1171" y="501.5" width="1.5" height="1.5"/><rect x="1166.5" y="503" width="1.5" height="1.5"/><rect x="1169.5" y="503" width="1.5" height="1.5"/><rect x="1165" y="504.5" width="1.5" height="1.5"/><rect x="1168" y="504.5" width="1.5" height="1.5"/><rect x="1171" y="504.5" width="1.5" height="1.5"/><rect x="1166.5" y="506" width="1.5" height="1.5"/><rect x="1169.5" y="506" width="1.5" height="1.5"/></g><rect x="1189" y="184.5" width="16.7" height="16" rx="1.5" fill="none" stroke="#e8a33a" stroke-width="1" stroke-dasharray="1.8 1.2"/><path d="M1195 188 L1195 197 L1197 195 L1199 198.5 L1200.5 197.5 L1198.5 194.5 L1201.5 194Z" fill="#fff"/></svg>
<div class="t" style="left:1212px;top:188.00px;font-size:8.3px;color:#dcdcdc;">Select Box</div>
<div class="a" style="left:1185px;top:207.7px;width:68.3px;height:13px;background:#4a4a4a;border-radius:3px"></div>
<div class="a" style="left:1185px;top:207.7px;width:13.7px;height:13px;background:#4772b3;border-radius:3px 0 0 3px"></div>
<svg class="a" style="left:1185px;top:208px;" width="70" height="13" viewBox="0 0 70 13"><rect x="2.5" y="2.5" width="9" height="8" fill="none" stroke="#fff" stroke-width="1.2" stroke-dasharray="1.3 1.1"/><path d="M15.5 5.5 H19 V2 H26 V8.5 H22.5 V11.5 H15.5Z" fill="#e6e6e6"/><path d="M29.5 5.5 V11.5 H36.5 M36 2 H40 V9" fill="none" stroke="#ddd" stroke-width="1.1" stroke-dasharray="1.3 1.1"/><path d="M33.5 2 H40 V8.5 H36.5 V5.5 H33.5Z" fill="#e6e6e6"/><path d="M43.5 5.5 H47 V2 H54 V8.5 H50.5 V11.5 H43.5Z" fill="#e6e6e6"/><rect x="47" y="5.5" width="3.5" height="3" fill="#4a4a4a"/><rect x="57.5" y="2.5" width="9" height="8.5" fill="none" stroke="#ccc" stroke-width="1" stroke-dasharray="1.3 1.1"/><rect x="59.8" y="4.8" width="4.5" height="4" fill="#e6e6e6"/></svg>
<div class="a" style="left:1183.8px;top:229.4px;width:210.2px;height:91.1px;background:#383838;border-radius:4px"></div>
<div class="a" style="left:1183.8px;top:229.4px;width:210.2px;height:35.5px;background:#3d3d3d;border-radius:4px 4px 0 0"></div>
<svg class="a" style="left:0px;top:0px;" width="1" height="1" viewBox="0 0 1 1"><path d="M1188.3 236.4 l3.5 3.5 l3.5 -3.5" fill="none" stroke="#ccc" stroke-width="1.15"/><path d="M1199.3 254.4 l3.5 3.5 l3.5 -3.5" fill="none" stroke="#ccc" stroke-width="1.15"/><g fill="#666"><rect x="1380" y="237" width="1" height="1"/><rect x="1382" y="237" width="1" height="1"/><rect x="1384" y="237" width="1" height="1"/><rect x="1386" y="237" width="1" height="1"/><rect x="1380" y="239" width="1" height="1"/><rect x="1382" y="239" width="1" height="1"/><rect x="1384" y="239" width="1" height="1"/><rect x="1386" y="239" width="1" height="1"/></g></svg>
<div class="t" style="left:1200px;top:235.00px;font-size:8.3px;color:#dcdcdc;">Options</div>
<div class="t" style="left:1210.3px;top:253.00px;font-size:8.3px;color:#dcdcdc;">Transform</div>
<div class="t" style="right:134px;top:275.00px;font-size:8.3px;color:#dcdcdc;">Affect Only</div>
<div class="a" style="left:1273px;top:274.3px;width:8.7px;height:8.7px;background:#545454;border-radius:2px"></div>
<div class="t" style="left:1285px;top:275.00px;font-size:8.3px;color:#dcdcdc;">Origins</div>
<div class="a" style="left:1273px;top:288.8px;width:8.7px;height:8.7px;background:#545454;border-radius:2px"></div>
<div class="t" style="left:1285px;top:289.00px;font-size:8.3px;color:#dcdcdc;">Locations</div>
<div class="a" style="left:1273px;top:303.3px;width:8.7px;height:8.7px;background:#545454;border-radius:2px"></div>
<div class="t" style="left:1285px;top:304.00px;font-size:8.3px;color:#dcdcdc;">Parents</div>
<div class="a" style="left:1183.8px;top:322px;width:210.2px;height:17.8px;background:#3d3d3d;border-radius:4px"></div>
<svg class="a" style="left:0px;top:0px;" width="1" height="1" viewBox="0 0 1 1"><path d="M1191.3 327 l3.3 3.3 l-3.3 3.3" fill="none" stroke="#ccc" stroke-width="1"/><g fill="#666"><rect x="1380" y="329" width="1" height="1"/><rect x="1382" y="329" width="1" height="1"/><rect x="1384" y="329" width="1" height="1"/><rect x="1386" y="329" width="1" height="1"/><rect x="1380" y="331" width="1" height="1"/><rect x="1382" y="331" width="1" height="1"/><rect x="1384" y="331" width="1" height="1"/><rect x="1386" y="331" width="1" height="1"/></g></svg>
<div class="t" style="left:1200px;top:327.00px;font-size:8.3px;color:#dcdcdc;">Workspace</div>
<div class="a" style="left:0px;top:736.5px;width:1400px;height:15.3px;background:#181818;"></div>
<svg class="a" style="left:0px;top:0px;" width="1" height="1" viewBox="0 0 1 1"><rect x="9.5" y="740.0" width="7" height="10" rx="3.3" fill="none" stroke="#bbb" stroke-width="0.9"/><path d="M10 744.0 V742.5 Q10 740.5 12.8 740.5 V744.0Z" fill="#bbb"/><rect x="163.5" y="740.0" width="7" height="10" rx="3.3" fill="none" stroke="#bbb" stroke-width="0.9"/><rect x="166.2" y="741.5" width="1.6" height="3.5" rx="0.8" fill="#bbb"/><rect x="317.0" y="740.0" width="7" height="10" rx="3.3" fill="none" stroke="#bbb" stroke-width="0.9"/><path d="M323.5 744.0 V742.5 Q323.5 740.5 320.7 740.5 V744.0Z" fill="#bbb"/></svg>
<div class="t" style="left:25px;top:741.00px;font-size:8.3px;color:#c8c8c8;">Set Active Modifier</div>
<div class="t" style="left:178.7px;top:741.00px;font-size:8.3px;color:#c8c8c8;">Pan View</div>
<div class="t" style="left:332.5px;top:741.00px;font-size:8.3px;color:#c8c8c8;">Context Menu</div>
<div class="t" style="right:6.2999999999999545px;top:741.00px;font-size:8.3px;color:#9a9a9a;">3.5.1</div>
<div class="a" style="left:0;top:751.8px;width:1400px;height:35.2px;background:#dbdfdf"></div>
<svg class="a" style="left:0px;top:0px;" width="1" height="1" viewBox="0 0 1 1"><circle cx="23" cy="769.5" r="6.5" fill="#f5a327"/><circle cx="20" cy="766" r="5" fill="#fbc25a" opacity="0.6"/><ellipse cx="18.5" cy="763.5" rx="5" ry="2.8" fill="#bcd6ee"/><ellipse cx="17" cy="762" rx="2.6" ry="2.2" fill="#cfe2f3"/><ellipse cx="25.5" cy="773.5" rx="5" ry="2.8" fill="#d2e3f2"/><ellipse cx="26.5" cy="771.8" rx="2.6" ry="2.2" fill="#e3eef8"/></svg>
<div class="t" style="left:37px;top:760.00px;font-size:8.6px;color:#1a1a1a;">27°C</div>
<div class="t" style="left:36.5px;top:772.00px;font-size:8.6px;color:#505050;">Partly cloudy</div>
<svg class="a" style="left:0px;top:0px;" width="1" height="1" viewBox="0 0 1 1"><g><rect x="433.5" y="760.5" width="8.2" height="8.2" fill="#2aa3ee"/><rect x="442.7" y="760.5" width="8.2" height="8.2" fill="#2aa3ee"/><rect x="433.5" y="769.7" width="8.2" height="8.2" fill="#1380d6"/><rect x="442.7" y="769.7" width="8.2" height="8.2" fill="#1380d6"/></g><rect x="461" y="757.5" width="158.5" height="23" rx="11.5" fill="#f6f7f7" stroke="#d0d4d6" stroke-width="0.6"/><circle cx="472" cy="768" r="3.6" fill="none" stroke="#222" stroke-width="1.2"/><path d="M469.3 770.8 L466.8 773.3" stroke="#222" stroke-width="1.3"/><path d="M603 763 V775 Q603 777 606 776.5 L613 773.5 Q616 771 613 768.5 L607 766.5" fill="none" stroke="#2d6fd8" stroke-width="1.6"/><circle cx="609" cy="771" r="2" fill="none" stroke="#3bb0e6" stroke-width="1.2"/><path d="M629.5 762 H636 L638 764 H646.5 V777 H629.5Z" fill="#f1b62b"/><rect x="629.5" y="766" width="17" height="11" fill="#fcd35a"/><rect x="631" y="772" width="14" height="2.2" fill="#2b8ee0"/><circle cx="670" cy="769.5" r="8.3" fill="#dd4b3e"/><path d="M670 769.5 L662.8 773.6 A8.3 8.3 0 0 0 674.2 776.7Z" fill="#1da462"/><path d="M670 769.5 L674.2 776.7 A8.3 8.3 0 0 0 677.2 765.3 L670 765.3Z" fill="#ffcd40"/><path d="M670 769.5 L662.8 773.6 A8.3 8.3 0 0 1 662.8 765.3 L670 765.3Z" fill="#dd4b3e"/><circle cx="670" cy="769.5" r="3.8" fill="#fff"/><circle cx="670" cy="769.5" r="3" fill="#4a8af4"/><path d="M695 760.5 H709 V775 L702 779 L695 775Z" fill="#1c1c1c"/><text x="702" y="769.5" font-size="5" font-weight="bold" text-anchor="middle" fill="#fff" font-family="Liberation Sans">EPIC</text><rect x="698" y="771" width="8" height="1" fill="#888"/><circle cx="734" cy="769.5" r="8" fill="#1b3a5c"/><circle cx="736.5" cy="767" r="3" fill="none" stroke="#fff" stroke-width="1.2"/><path d="M726.5 771.5 L734 774 M734 774 L736 768" stroke="#fff" stroke-width="1.4"/><circle cx="731.5" cy="773" r="1.8" fill="#fff"/><circle cx="766" cy="769.5" r="8.2" fill="#5865f2"/><path d="M761 766 Q766 763.5 771 766 Q773 770 772 773 Q769.5 775 766 775 Q762.5 775 760 773 Q759 770 761 766Z" fill="#fff"/><circle cx="763.8" cy="770" r="1.1" fill="#5865f2"/><circle cx="768.2" cy="770" r="1.1" fill="#5865f2"/><rect x="790" y="761.5" width="16" height="15.5" rx="2" fill="#0a1a33" stroke="#2c5f9e" stroke-width="1.2"/><text x="798" y="772" font-size="7.5" font-weight="bold" text-anchor="middle" fill="#31a8ff" font-family="Liberation Sans">Ps</text><rect x="822" y="761.5" width="16" height="16" rx="3.5" fill="#7a3bd6"/><path d="M825.5 766 L830 774 L834.5 766" fill="none" stroke="#fff" stroke-width="2"/><circle cx="862" cy="769.5" r="8" fill="#1aa0e8"/><text x="862" y="773.5" font-size="11" font-weight="bold" text-anchor="middle" fill="#fff" font-family="Liberation Sans">S</text><circle cx="894" cy="769.5" r="8" fill="#262626"/><circle cx="894" cy="769.5" r="6" fill="none" stroke="#555" stroke-width="0.8"/><circle cx="891.5" cy="767" r="2.2" fill="#eee"/><circle cx="897" cy="768.5" r="2.2" fill="#eee"/><circle cx="893.5" cy="773" r="2.2" fill="#eee"/><rect x="918" y="761" width="17" height="17" rx="3" fill="#2b88d8"/><path d="M918.5 776 L925 768 L930 773 L932 771 L934.5 776Z" fill="#a8e0ff"/><circle cx="930.5" cy="765.5" r="1.8" fill="#fff"/><rect x="944" y="756.5" width="28" height="27" rx="4" fill="#eef0f2" fill-opacity="0.8"/><circle cx="960" cy="770" r="4.8" fill="#fff" stroke="#ea7600" stroke-width="2.2"/><circle cx="960" cy="770" r="2" fill="#265787"/><path d="M950.5 767 H956.5 M951.5 771.5 L955 769.5 M952 775.5 L956 772.5" stroke="#ea7600" stroke-width="1.8" stroke-linecap="round"/><rect x="953" y="782.3" width="12" height="2.5" rx="1.2" fill="#1a6fd0"/><rect x="635.5" y="781.8" width="5" height="2" rx="1" fill="#7a7f83"/><rect x="667.5" y="781.8" width="5" height="2" rx="1" fill="#7a7f83"/><rect x="731.5" y="781.8" width="5" height="2" rx="1" fill="#7a7f83"/><rect x="763.5" y="781.8" width="5" height="2" rx="1" fill="#7a7f83"/><rect x="795.5" y="781.8" width="5" height="2" rx="1" fill="#7a7f83"/><rect x="923.5" y="781.8" width="5" height="2" rx="1" fill="#7a7f83"/><path d="M1187.5 772 L1191.3 768 L1195.2 772" fill="none" stroke="#222" stroke-width="1"/><path d="M1209 773 Q1207.5 773 1208 770.5 Q1208.5 768 1211 768.5 Q1212 765 1215.5 765.5 Q1219 766 1219 769" fill="none" stroke="#333" stroke-width="1"/><circle cx="1217.8" cy="772.8" r="3.2" fill="#e0252b"/><path d="M1216.4 771.4 L1219.2 774.2 M1219.2 771.4 L1216.4 774.2" stroke="#fff" stroke-width="0.8"/><path d="M1264.5 767.5 Q1270 762 1275.5 767.5 M1266.3 769.5 Q1270 765.8 1273.7 769.5 M1268.1 771.5 Q1270 769.7 1271.9 771.5" fill="none" stroke="#222" stroke-width="1"/><circle cx="1270" cy="773" r="0.9" fill="#222"/><path d="M1282 767 H1284.5 L1288 764 V776 L1284.5 773 H1282Z" fill="none" stroke="#222" stroke-width="1"/><path d="M1290 767 Q1291.5 770 1290 773 M1292 765.5 Q1294.5 770 1292 774.5" fill="none" stroke="#222" stroke-width="0.9"/><rect x="1299.5" y="766.5" width="10.5" height="7" rx="1" fill="none" stroke="#222" stroke-width="1"/><rect x="1301" y="768" width="7.5" height="4" fill="#222"/><rect x="1310.5" y="768.5" width="1" height="3" fill="#222"/><path d="M1303 764 L1305 766" stroke="#222" stroke-width="0.8"/><circle cx="1379.7" cy="768.6" r="6" fill="#1f6fd1"/><text x="1379.7" y="771.5" font-size="7.5" text-anchor="middle" fill="#fff" font-family="Liberation Sans">8</text></svg>
<div class="t" style="left:487px;top:765.00px;font-size:9px;color:#5a5a5a;">Search</div>
<div class="t" style="left:1233.7px;top:761.00px;font-size:8.3px;color:#1a1a1a;">ENG</div>
<div class="t" style="left:1237.7px;top:772.00px;font-size:8.3px;color:#1a1a1a;">IN</div>
<div class="t" style="right:31.40000000000009px;top:760.00px;font-size:8.3px;color:#1a1a1a;">19:44</div>
<div class="t" style="right:31.40000000000009px;top:772.00px;font-size:8.6px;color:#1a1a1a;">02-05-2023</div>
<svg class="a" style="left:0px;top:0px;" width="1" height="1" viewBox="0 0 1 1"><path d="M1240 758 L1264.5 745.7 L1254 765.7 L1250 759.5Z" fill="#ffffff" fill-opacity="0.55"/><path d="M1250 759.5 L1264.5 745.7 L1251 762Z" fill="#b9d6ee" fill-opacity="0.6"/></svg>
<div class="t" style="left:1268.8px;top:748.00px;font-size:20.4px;color:rgba(255,255,255,0.68);font-weight:bold;-webkit-text-stroke:0">Flightsim.to</div>
</body></html>
